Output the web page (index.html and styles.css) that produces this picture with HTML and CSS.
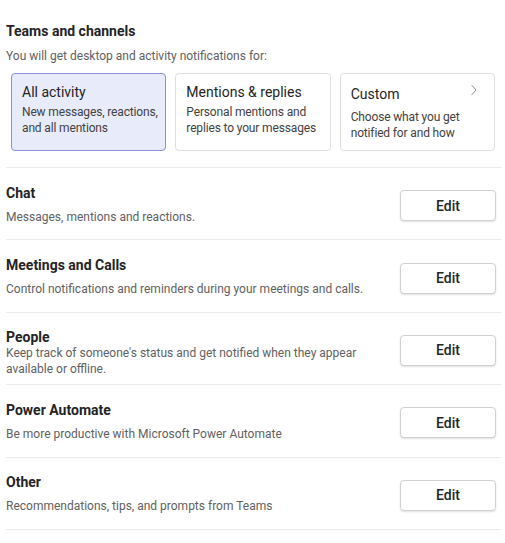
FILE: index.html
```html
<!DOCTYPE html>
<html>
<head>
<meta charset="utf-8">
<link rel="stylesheet" href="styles.css">
</head>
<body>
<div class="page">
  <section class="intro">
    <h2 class="section-title">Teams and channels</h2>
    <p class="section-sub">You will get desktop and activity notifications for:</p>
    <div class="cards">
      <div class="card card-selected">
        <div class="card-title">All activity</div>
        <div class="card-desc">New messages, reactions, and all mentions</div>
      </div>
      <div class="card">
        <div class="card-title">Mentions &amp; replies</div>
        <div class="card-desc">Personal mentions and replies to your messages</div>
      </div>
      <div class="card card-custom">
        <div class="card-head">
          <div class="card-title">Custom</div>
          <svg class="chevron" width="8" height="12" viewBox="0 0 8 12"><path d="M2 1.5 L6 6 L2 10.5" fill="none" stroke="#8a8a8a" stroke-width="1" stroke-linecap="round" stroke-linejoin="round"/></svg>
        </div>
        <div class="card-desc">Choose what you get notified for and how</div>
      </div>
    </div>
  </section>
  <div class="rows">
    <div class="row">
      <div class="row-text">
        <div class="row-title">Chat</div>
        <div class="row-desc">Messages, mentions and reactions.</div>
      </div>
      <button class="edit">Edit</button>
    </div>
    <div class="row">
      <div class="row-text">
        <div class="row-title">Meetings and Calls</div>
        <div class="row-desc">Control notifications and reminders during your meetings and calls.</div>
      </div>
      <button class="edit">Edit</button>
    </div>
    <div class="row">
      <div class="row-text row-text-tight">
        <div class="row-title">People</div>
        <div class="row-desc">Keep track of someone's status and get notified when they appear available or offline.</div>
      </div>
      <button class="edit">Edit</button>
    </div>
    <div class="row">
      <div class="row-text">
        <div class="row-title">Power Automate</div>
        <div class="row-desc">Be more productive with Microsoft Power Automate</div>
      </div>
      <button class="edit">Edit</button>
    </div>
    <div class="row row-last">
      <div class="row-text">
        <div class="row-title">Other</div>
        <div class="row-desc">Recommendations, tips, and prompts from Teams</div>
      </div>
      <button class="edit">Edit</button>
    </div>
  </div>
</div>
</body>
</html>
```
FILE: styles.css
```css
* { box-sizing: border-box; }
html, body { margin: 0; padding: 0; background: #ffffff; }
body {
  font-family: Roboto, "Liberation Sans", sans-serif;
  color: #242424;
}
.page {
  width: 495px;
  margin-left: 6px;
  padding-top: 21px;
}
.section-title {
  margin: 0;
  font-size: 14px;
  line-height: 20px;
  font-weight: 700;
  color: #242424;
}
.section-sub {
  margin: 7px 0 0 0;
  font-size: 12px;
  line-height: 16px;
  color: #616161;
}
.cards {
  display: grid;
  grid-template-columns: repeat(3, 1fr);
  gap: 9px;
  margin: 9px 6px 16px 5px;
}
.card {
  position: relative;
  border: 1px solid #e0e0e0;
  border-radius: 4px;
  padding: 8px 1px 10px 10px;
  height: 78px;
  background: #ffffff;
}
.card-selected {
  background: #e8ebfa;
  border-color: #8b8fd9;
}
.card-title {
  font-size: 14px;
  line-height: 20px;
  color: #242424;
}
.card-desc {
  margin-top: 2px;
  font-size: 12px;
  line-height: 16px;
  letter-spacing: -0.15px;
  color: #424242;
}
.card-head {
  display: flex;
  justify-content: space-between;
  align-items: flex-start;
  height: 24px;
  padding-top: 2px;
}
.card-custom .card-desc { margin-top: 3px; }
.chevron { margin-top: 0; margin-right: 15px; }
.row {
  display: flex;
  align-items: center;
  justify-content: space-between;
  height: 72.4px;
  border-top: 1px solid #ebebeb;
  padding-right: 5px;
}
.row-last { border-bottom: 1px solid #ebebeb; height: 73.4px; }
.row-text {
  display: flex;
  flex-direction: column;
  max-width: 370px;
}
.row-text-tight { margin-top: 8px; }
.row-title {
  font-size: 14px;
  line-height: 20px;
  font-weight: 700;
  color: #242424;
}
.row-desc {
  margin-top: 6px;
  font-size: 12px;
  line-height: 16px;
  color: #616161;
}
.row-text-tight .row-desc { margin-top: -2px; }
.edit {
  width: 96px;
  height: 31px;
  margin-top: 4px;
  border: 1px solid #d1d1d1;
  border-radius: 4px;
  background: #ffffff;
  box-shadow: 0 1px 2px rgba(0,0,0,0.12);
  font-family: inherit;
  font-size: 14px;
  font-weight: 500;
  color: #242424;
  padding: 0;
}
```
